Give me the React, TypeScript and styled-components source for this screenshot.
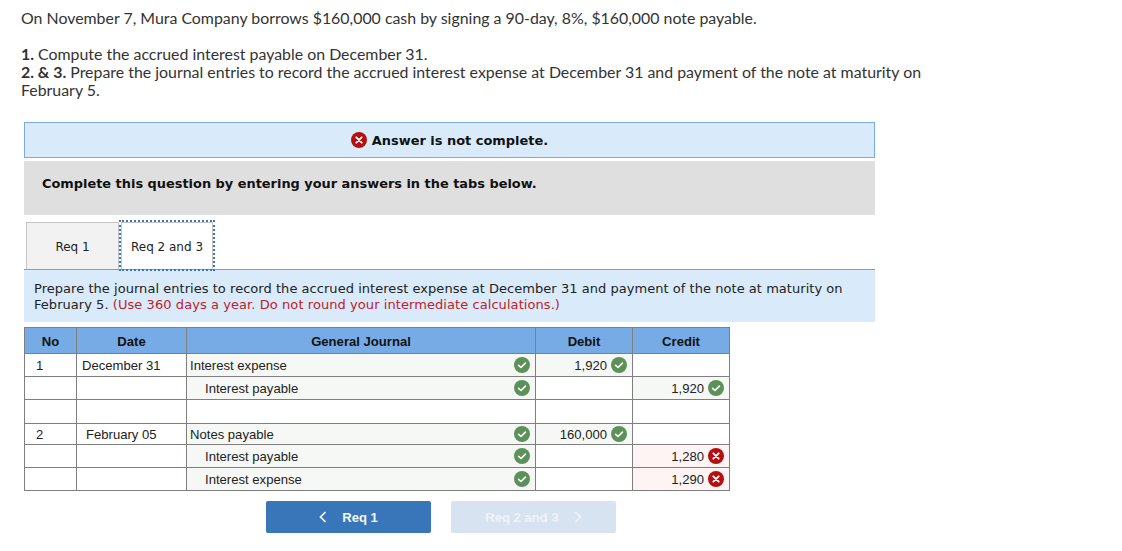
import React from "react";
import styled, { createGlobalStyle } from "styled-components";

const GlobalStyle = createGlobalStyle`
  html, body {
    margin: 0;
    padding: 0;
    background: #fff;
  }
`;

const Page = styled.div`
  width: 1122px;
  height: 551px;
  overflow: hidden;
  padding: 9px 0 0 21px;
  box-sizing: border-box;
`;

const Question = styled.div`
  width: 905px;
  font-family: "Lato", "Liberation Sans", sans-serif;
  font-size: 15.9px;
  line-height: 18px;
  color: #333;

  p {
    margin: 0 0 18px;
  }
  b {
    font-weight: 700;
  }
`;

const Panel = styled.div`
  width: 851px;
  margin: 23px 0 0 3px;
  font-family: "DejaVu Sans", sans-serif;
`;

const Banner = styled.div`
  height: 36px;
  box-sizing: border-box;
  border: 1px solid #7aabe0;
  background: #d9ebfa;
  display: flex;
  align-items: center;
  justify-content: center;
  gap: 5px;
  font-size: 12.95px;
  font-weight: 700;
  color: #111;
`;

const Instruction = styled.div`
  height: 54px;
  margin-top: 3px;
  padding: 0 0 10px 18px;
  box-sizing: border-box;
  background: #dfdfdf;
  display: flex;
  align-items: center;
  font-size: 12.92px;
  font-weight: 700;
  color: #111;
`;

const Tabs = styled.div`
  height: 55px;
  padding-left: 2px;
  display: flex;
  align-items: flex-end;
  border-bottom: 1px solid #999;
  box-sizing: border-box;
`;

const Tab = styled.div<{ $active?: boolean }>`
  box-sizing: border-box;
  height: 47px;
  width: ${(p) => (p.$active ? "92px" : "93px")};
  margin-left: ${(p) => (p.$active ? "2px" : "0")};
  padding-top: 1px;
  display: flex;
  align-items: center;
  justify-content: center;
  font-size: 12px;
  color: #222;
  background: ${(p) => (p.$active ? "#fff" : "#f2f2f2")};
  border: 1px solid #c4c4c4;
  border-bottom: none;
  outline: ${(p) => (p.$active ? "2px dotted #3a75bb" : "none")};
`;

const Prompt = styled.div`
  height: 52px;
  padding: 11px 10px 0;
  box-sizing: border-box;
  background: #d9ebfa;
  font-size: 13px;
  line-height: 16px;
  color: #222;
  letter-spacing: 0.04px;

  em {
    font-style: normal;
    color: #c0202a;
    letter-spacing: 0.07px;
  }
`;

const Journal = styled.table`
  margin-top: 5px;
  border-collapse: collapse;
  table-layout: fixed;
  width: 706px;
  font-family: "Liberation Sans", Arial, sans-serif;
  font-size: 13.1px;
  color: #222;

  th, td {
    border: 1px solid #7f7f7f;
    padding: 0;
    box-sizing: border-box;
  }
  th {
    height: 26px;
    padding-top: 2px;
    background: #77abe5;
    font-weight: 700;
    color: #111;
  }
`;

const Row = styled.tr<{ $h: number }>`
  height: ${(p) => p.$h}px;
  td {
    height: ${(p) => p.$h}px;
  }
`;

const NoCell = styled.td`
  padding-left: 11px !important;
  text-align: left;
`;

const DateCell = styled.td<{ $inset: number }>`
  padding-left: ${(p) => p.$inset}px !important;
`;

const EntryCell = styled.td`
  background: #f6f8f5;
`;

const EntryInner = styled.div<{ $indent?: boolean }>`
  display: flex;
  align-items: center;
  justify-content: space-between;
  padding: 0 5px 0 ${(p) => (p.$indent ? "18px" : "3px")};
`;

const AmountCell = styled.td<{ $state?: "ok" | "bad" }>`
  background: ${(p) =>
    p.$state === "ok" ? "#f6f8f5" : p.$state === "bad" ? "#fdf4f3" : "#fff"};
`;

const AmountInner = styled.div`
  display: flex;
  align-items: center;
  justify-content: flex-end;
  gap: 4px;
  padding-right: 5px;
`;

const Nav = styled.div`
  display: flex;
  gap: 20px;
  margin: 10px 0 0 242px;
`;

const NavButton = styled.div<{ $disabled?: boolean }>`
  width: 165px;
  height: 32px;
  border-radius: 2px;
  display: flex;
  align-items: center;
  justify-content: center;
  gap: 15px;
  font-family: "Liberation Sans", Arial, sans-serif;
  font-size: 13.1px;
  font-weight: 700;
  color: ${(p) => (p.$disabled ? "#eef3f9" : "#f4f8fc")};
  background: ${(p) => (p.$disabled ? "#d7e3f0" : "#3875b9")};
`;

const CrossIcon = ({ size = 16 }: { size?: number }) => (
  <svg width={size} height={size} viewBox="0 0 16 16" style={{ flex: "none" }}>
    <circle cx="8" cy="8" r="8" fill="#b50f0f" />
    <path d="M5.3 5.3l5.4 5.4M10.7 5.3l-5.4 5.4" stroke="#fff" strokeWidth="1.8" strokeLinecap="round" />
  </svg>
);

const CheckIcon = () => (
  <svg width="16" height="16" viewBox="0 0 16 16" style={{ flex: "none" }}>
    <circle cx="8" cy="8" r="8" fill="#5c9159" />
    <path d="M4.6 8.3l2.4 2.2 4.4-4.4" fill="none" stroke="#fff" strokeWidth="1.6" strokeLinecap="round" strokeLinejoin="round" />
  </svg>
);

const Chevron = ({ dir }: { dir: "left" | "right" }) => (
  <svg width="8" height="12" viewBox="0 0 8 12" fill="none">
    <path
      d={dir === "left" ? "M6.5 1L1.5 6l5 5" : "M1.5 1l5 5-5 5"}
      stroke="currentColor"
      strokeWidth="1.7"
    />
  </svg>
);

type Line = {
  h: number;
  no?: string;
  date?: string;
  inset?: number;
  account?: string;
  indent?: boolean;
  debit?: string;
  credit?: string;
  creditBad?: boolean;
};

const lines: Line[] = [
  { h: 23, no: "1", date: "December 31", inset: 5, account: "Interest expense", debit: "1,920" },
  { h: 23, account: "Interest payable", indent: true, credit: "1,920" },
  { h: 24 },
  { h: 21, no: "2", date: "February 05", inset: 9, account: "Notes payable", debit: "160,000" },
  { h: 23, account: "Interest payable", indent: true, credit: "1,280", creditBad: true },
  { h: 23, account: "Interest expense", indent: true, credit: "1,290", creditBad: true },
];

export default function App() {
  return (
    <Page>
      <GlobalStyle />
      <Question>
        <p>On November 7, Mura Company borrows $160,000 cash by signing a 90-day, 8%, $160,000 note payable.</p>
        <div>
          <b>1.</b> Compute the accrued interest payable on December 31.
          <br />
          <b>2. &amp; 3.</b> Prepare the journal entries to record the accrued interest expense at December 31 and payment of the note at maturity on February 5.
        </div>
      </Question>
      <Panel>
        <Banner>
          <CrossIcon />
          Answer is not complete.
        </Banner>
        <Instruction>Complete this question by entering your answers in the tabs below.</Instruction>
        <Tabs>
          <Tab>Req 1</Tab>
          <Tab $active>Req 2 and 3</Tab>
        </Tabs>
        <Prompt>
          Prepare the journal entries to record the accrued interest expense at December 31 and payment of the note at maturity on February 5.{" "}
          <em>(Use 360 days a year. Do not round your intermediate calculations.)</em>
        </Prompt>
        <Journal>
          <colgroup>
            <col width={52} />
            <col width={110} />
            <col width={349} />
            <col width={97} />
            <col width={97} />
          </colgroup>
          <thead>
            <tr>
              <th>No</th>
              <th>Date</th>
              <th>General Journal</th>
              <th>Debit</th>
              <th>Credit</th>
            </tr>
          </thead>
          <tbody>
            {lines.map((line, i) => (
              <Row key={i} $h={line.h}>
                <NoCell>{line.no}</NoCell>
                <DateCell $inset={line.inset ?? 0}>{line.date}</DateCell>
                {line.account ? (
                  <EntryCell>
                    <EntryInner $indent={line.indent}>
                      {line.account}
                      <CheckIcon />
                    </EntryInner>
                  </EntryCell>
                ) : (
                  <td />
                )}
                <AmountCell $state={line.debit ? "ok" : undefined}>
                  {line.debit && (
                    <AmountInner>
                      {line.debit}
                      <CheckIcon />
                    </AmountInner>
                  )}
                </AmountCell>
                <AmountCell $state={line.credit ? (line.creditBad ? "bad" : "ok") : undefined}>
                  {line.credit && (
                    <AmountInner>
                      {line.credit}
                      {line.creditBad ? <CrossIcon /> : <CheckIcon />}
                    </AmountInner>
                  )}
                </AmountCell>
              </Row>
            ))}
          </tbody>
        </Journal>
        <Nav>
          <NavButton>
            <Chevron dir="left" />
            Req 1
          </NavButton>
          <NavButton $disabled>
            Req 2 and 3
            <Chevron dir="right" />
          </NavButton>
        </Nav>
      </Panel>
    </Page>
  );
}
